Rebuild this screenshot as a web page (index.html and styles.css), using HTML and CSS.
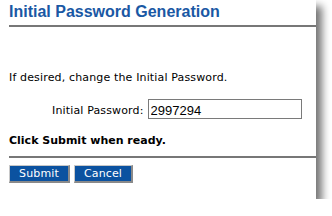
FILE: index.html
```html
<!DOCTYPE html>
<html>
<head>
<meta charset="utf-8">
<link rel="stylesheet" href="styles.css">
</head>
<body>
<div class="panel">
  <h1 class="title">Initial Password Generation</h1>
  <div class="rule rule-top"></div>
  <p class="intro">If desired, change the Initial Password.</p>
  <div class="field-row">
    <label class="field-label" for="pw">Initial Password:</label>
    <input class="field-input" id="pw" type="text" value="2997294">
  </div>
  <p class="hint">Click Submit when ready.</p>
  <div class="rule rule-bottom"></div>
  <div class="actions">
    <button class="btn btn-submit" type="button">Submit</button>
    <button class="btn btn-cancel" type="button">Cancel</button>
  </div>
</div>
</body>
</html>
```
FILE: styles.css
```css
html, body {
  margin: 0;
  padding: 0;
  background: #ffffff;
}
.panel {
  width: 316px;
  height: 199px;
  box-sizing: border-box;
  padding-left: 9px;
  background: #ffffff;
  box-shadow: 6px 6px 8px rgba(0, 0, 0, 0.55);
  font-family: "DejaVu Sans", Verdana, sans-serif;
  font-size: 11px;
  letter-spacing: 0.15px;
  color: #000;
}
.title {
  margin: 0;
  padding-top: 2px;
  font-family: "Liberation Sans", Arial, sans-serif;
  font-weight: bold;
  font-size: 16px;
  line-height: 20px;
  letter-spacing: 0;
  color: #1a58a4;
}
.rule {
  height: 0;
  border-top: 2px solid #777777;
}
.rule-top {
  margin-top: 3px;
}
.intro {
  margin: 44px 0 0;
  line-height: 14px;
}
.field-row {
  display: flex;
  align-items: flex-end;
  margin-top: 14px;
  padding-left: 43px;
}
.field-label {
  line-height: 14px;
  margin-bottom: 1px;
  margin-right: 4px;
}
.field-input {
  box-sizing: border-box;
  width: 154px;
  height: 20px;
  margin: 0;
  padding: 3px 2px 0;
  border: 1px solid #7a7a7a;
  font-family: "Liberation Sans", Arial, sans-serif;
  font-size: 13px;
  color: #000;
  outline: none;
}
.hint {
  margin: 15px 0 0;
  line-height: 14px;
  font-weight: bold;
  letter-spacing: 0;
}
.rule-bottom {
  margin-top: 8px;
}
.actions {
  display: flex;
  gap: 4px;
  margin-top: 7px;
}
.btn {
  box-sizing: border-box;
  height: 18px;
  margin: 0;
  padding: 0;
  background: #0b52a0;
  color: #ffffff;
  font-family: "DejaVu Sans", Verdana, sans-serif;
  font-size: 11px;
  letter-spacing: 0.15px;
  line-height: 15px;
  border-style: solid;
  border-width: 1px 2px 2px 1px;
  border-color: #c8c8c8 #8a8a8a #8a8a8a #c8c8c8;
  border-radius: 0;
}
.btn-submit {
  width: 61px;
}
.btn-cancel {
  width: 59px;
}
```
